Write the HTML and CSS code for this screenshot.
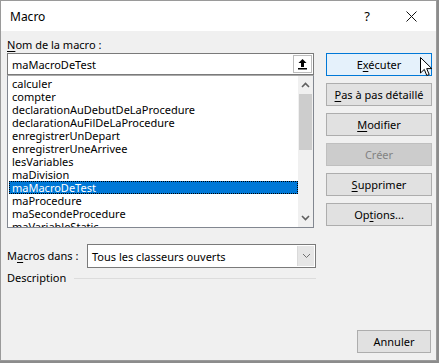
FILE: index.html
```html
<!DOCTYPE html>
<html lang="fr">
<head>
  <meta charset="UTF-8" />
  <title>Macro</title>
  <link rel="stylesheet" href="styles.css">
</head>
<body>
  <div class="window">
    <div class="titlebar">
      <span class="title">Macro</span>
      <span class="tb-btn">?</span>
      <span class="tb-btn tb-close">
        <svg width="11" height="11" viewBox="0 0 11 11"><path d="M0.5 0.5L10.5 10.5M10.5 0.5L0.5 10.5" stroke="#111" stroke-width="1"/></svg>
      </span>
    </div>

    <div class="content">
      <div class="left">
        <div class="label"><u>N</u>om de la macro :</div>
        <div class="name-box">
          <span class="name-value">maMacroDeTest</span>
          <span class="up-btn">
            <svg width="11" height="12" viewBox="0 0 11 12"><path d="M5.5 1L1.5 5H4V9H7V5H9.5Z" fill="#000"/><rect x="1" y="10" width="9" height="1.5" fill="#000"/></svg>
          </span>
        </div>
        <div class="list">
          <ul class="items" id="items"></ul>
          <div class="scrollbar">
            <svg class="arrow" width="9" height="6" viewBox="0 0 9 6"><path d="M1 5L4.5 1.5L8 5" stroke="#606060" stroke-width="1.6" fill="none"/></svg>
            <div class="track"><div class="thumb"></div></div>
            <svg class="arrow" width="9" height="6" viewBox="0 0 9 6"><path d="M1 1L4.5 4.5L8 1" stroke="#606060" stroke-width="1.6" fill="none"/></svg>
          </div>
        </div>

        <div class="row-in">
          <span class="label">M<u>a</u>cros dans :</span>
          <div class="select">
            <span class="select-value">Tous les classeurs ouverts</span>
            <span class="select-btn">
              <svg width="9" height="6" viewBox="0 0 9 6"><path d="M1 1L4.5 4.5L8 1" stroke="#707070" stroke-width="1" fill="none"/></svg>
            </span>
          </div>
        </div>

        <div class="desc">
          <span class="label">Description</span>
          <span class="rule"></span>
        </div>
      </div>

      <div class="right">
        <button class="btn default">E<u>x</u>écuter</button>
        <button class="btn"><u>P</u>as à pas détaillé</button>
        <button class="btn"><u>M</u>odifier</button>
        <button class="btn disabled">Créer</button>
        <button class="btn"><u>S</u>upprimer</button>
        <button class="btn">Op<u>t</u>ions...</button>
        <button class="btn cancel">Annuler</button>
      </div>
    </div>

    <svg class="cursor" width="13" height="20" viewBox="0 0 13 20"><path d="M0.5 0.5V16L4.3 12.4L6.8 18.5L9.2 17.5L6.7 11.6H11.8Z" fill="#fff" stroke="#000" stroke-width="1"/></svg>
  </div>

  <script>
    const macros = ['calculer','compter','declarationAuDebutDeLaProcedure','declarationAuFilDeLaProcedure',
      'enregistrerUnDepart','enregistrerUneArrivee','lesVariables','maDivision','maMacroDeTest',
      'maProcedure','maSecondeProcedure','maVariableStatic'];
    const list = document.getElementById('items');
    macros.forEach(name => {
      const li = document.createElement('li');
      li.textContent = name;
      if (name === 'maMacroDeTest') li.className = 'selected';
      list.appendChild(li);
    });
  </script>
</body>
</html>
```

FILE: styles.css
```css
body {
  margin: 0;
  background: #8c8c8c;
  font-family: "Noto Sans", sans-serif;
  font-size: 11px;
  color: #000;
}
u { text-decoration-thickness: 1px; text-underline-offset: 2px; }
.window {
  position: relative;
  width: 435px;
  height: 359px;
  border: 1px solid #9a9a9a;
  background: #f0f0f0;
  display: flex;
  flex-direction: column;
}
.titlebar {
  height: 30px;
  background: #fff;
  display: flex;
  align-items: center;
}
.title {
  flex: 1;
  padding-left: 9px;
  font-size: 12px;
}
.tb-btn {
  width: 44px;
  text-align: center;
  font-size: 13px;
}
.tb-close { display: flex; justify-content: center; margin-right: 3px; }
.content {
  flex: 1;
  display: flex;
  gap: 10px;
  padding: 6px 4px 7px 6px;
}
.left {
  width: 309px;
  display: flex;
  flex-direction: column;
}
.label { line-height: 16px; white-space: nowrap; }
.name-box {
  height: 20px;
  width: 305px;
  border: 1px solid #7a7a7a;
  background: #fff;
  display: flex;
  align-items: center;
}
.name-value { flex: 1; padding-left: 4px; }
.up-btn {
  width: 17px;
  height: 16px;
  margin-right: 1px;
  border: 1px solid #bcbcbc;
  background: #fff;
  display: flex;
  align-items: center;
  justify-content: center;
}
.list {
  height: 151px;
  width: 305px;
  border: 1px solid #828790;
  border-top-color: #ababab;
  background: #fff;
  display: flex;
  overflow: hidden;
}
.items {
  flex: 1;
  list-style: none;
  margin: 0;
  padding: 1px 0 0 1px;
}
.items li {
  height: 13px;
  line-height: 13px;
  padding-left: 3px;
  white-space: nowrap;
}
.items li.selected {
  background: #0078d7;
  color: #fff;
  outline: 1px dotted #000;
  outline-offset: -1px;
}
.scrollbar {
  width: 15px;
  background: #f0f0f0;
  display: flex;
  flex-direction: column;
  align-items: center;
}
.arrow { margin: 6px 0; }
.track { flex: 1; width: 13px; }
.thumb { height: 56px; background: #cdcdcd; }
.row-in {
  margin-top: 16px;
  display: flex;
  align-items: center;
  justify-content: space-between;
}
.select {
  width: 227px;
  height: 22px;
  border: 1px solid #7a7a7a;
  background: #fff;
  display: flex;
  align-items: center;
}
.select-value { flex: 1; padding-left: 4px; }
.select-btn {
  width: 16px;
  height: 20px;
  margin-right: 1px;
  background: #e6e6e6;
  border-left: 1px solid #dadada;
  display: flex;
  align-items: center;
  justify-content: center;
}
.desc {
  margin-top: 2px;
  display: flex;
  align-items: center;
  gap: 8px;
}
.rule { flex: 1; height: 1px; background: #dcdcdc; }
.right {
  width: 106px;
  padding-top: 16px;
  display: flex;
  flex-direction: column;
  gap: 7px;
}
.btn {
  height: 23px;
  border: 1px solid #adadad;
  background: #e1e1e1;
  font: inherit;
  color: #000;
  padding: 0;
}
.btn.default { background: #e5f1fb; border-color: #0078d7; }
.btn.disabled { background: #cccccc; border-color: #bfbfbf; color: #838383; }
.btn.cancel { margin-top: auto; width: 74px; align-self: flex-end; margin-right: 1px; }
.cursor { position: absolute; left: 419px; top: 56px; }
```
